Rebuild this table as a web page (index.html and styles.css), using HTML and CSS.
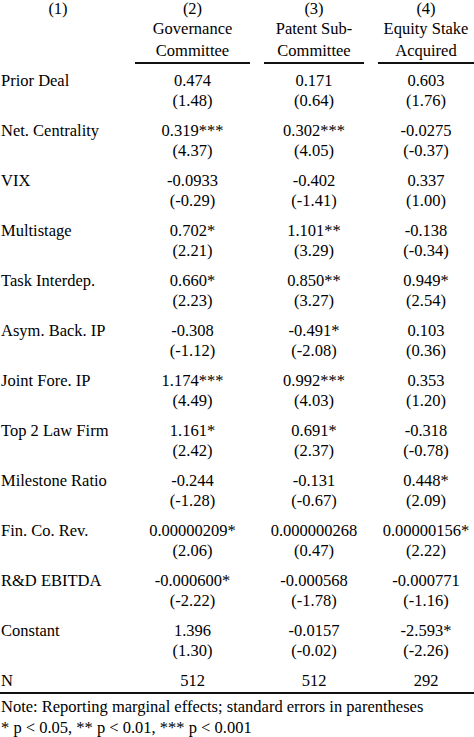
FILE: index.html
```html
<!DOCTYPE html>
<html>
<head>
<meta charset="utf-8">
<link rel="stylesheet" href="styles.css">
</head>
<body>
<div class="page">
  <div class="grid head">
    <div class="hcell first"><div class="l1">(1)</div></div>
    <div class="hcell ruled"><div class="l1">(2)</div><div class="ln">Governance</div><div class="ln">Committee</div></div>
    <div class="hcell ruled"><div class="l1">(3)</div><div class="ln">Patent Sub-</div><div class="ln">Committee</div></div>
    <div class="hcell ruled"><div class="l1">(4)</div><div class="ln">Equity Stake</div><div class="ln">Acquired</div></div>
  </div>

  <div class="grid body">
    <div class="label">Prior Deal</div>
    <div class="val">0.474<br>(1.48)</div>
    <div class="val">0.171<br>(0.64)</div>
    <div class="val">0.603<br>(1.76)</div>

    <div class="label">Net. Centrality</div>
    <div class="val">0.319***<br>(4.37)</div>
    <div class="val">0.302***<br>(4.05)</div>
    <div class="val">-0.0275<br>(-0.37)</div>

    <div class="label">VIX</div>
    <div class="val">-0.0933<br>(-0.29)</div>
    <div class="val">-0.402<br>(-1.41)</div>
    <div class="val">0.337<br>(1.00)</div>

    <div class="label">Multistage</div>
    <div class="val">0.702*<br>(2.21)</div>
    <div class="val">1.101**<br>(3.29)</div>
    <div class="val">-0.138<br>(-0.34)</div>

    <div class="label">Task Interdep.</div>
    <div class="val">0.660*<br>(2.23)</div>
    <div class="val">0.850**<br>(3.27)</div>
    <div class="val">0.949*<br>(2.54)</div>

    <div class="label">Asym. Back. IP</div>
    <div class="val">-0.308<br>(-1.12)</div>
    <div class="val">-0.491*<br>(-2.08)</div>
    <div class="val">0.103<br>(0.36)</div>

    <div class="label">Joint Fore. IP</div>
    <div class="val">1.174***<br>(4.49)</div>
    <div class="val">0.992***<br>(4.03)</div>
    <div class="val">0.353<br>(1.20)</div>

    <div class="label">Top 2 Law Firm</div>
    <div class="val">1.161*<br>(2.42)</div>
    <div class="val">0.691*<br>(2.37)</div>
    <div class="val">-0.318<br>(-0.78)</div>

    <div class="label">Milestone Ratio</div>
    <div class="val">-0.244<br>(-1.28)</div>
    <div class="val">-0.131<br>(-0.67)</div>
    <div class="val">0.448*<br>(2.09)</div>

    <div class="label">Fin. Co. Rev.</div>
    <div class="val">0.00000209*<br>(2.06)</div>
    <div class="val">0.000000268<br>(0.47)</div>
    <div class="val">0.00000156*<br>(2.22)</div>

    <div class="label">R&amp;D EBITDA</div>
    <div class="val">-0.000600*<br>(-2.22)</div>
    <div class="val">-0.000568<br>(-1.78)</div>
    <div class="val">-0.000771<br>(-1.16)</div>

    <div class="label">Constant</div>
    <div class="val">1.396<br>(1.30)</div>
    <div class="val">-0.0157<br>(-0.02)</div>
    <div class="val">-2.593*<br>(-2.26)</div>

    <div class="label">N</div>
    <div class="val">512</div>
    <div class="val">512</div>
    <div class="val">292</div>
  </div>

  <div class="notes">
    <div>Note: Reporting marginal effects; standard errors in parentheses</div>
    <div>* p &lt; 0.05, ** p &lt; 0.01, *** p &lt; 0.001</div>
  </div>
</div>
</body>
</html>
```

FILE: styles.css
```css
html, body {
  margin: 0;
  padding: 0;
  background: #ffffff;
}

body {
  width: 474px;
  height: 737px;
  overflow: hidden;
  font-family: "Liberation Serif", "Times New Roman", serif;
  font-size: 16.5px;
  color: #000000;
}

.grid {
  display: grid;
  grid-template-columns: 121px 115px 100px 96px;
  column-gap: 14px;
}

.hcell {
  text-align: center;
  white-space: nowrap;
}

.hcell .l1 {
  line-height: 18px;
}

.hcell .ln {
  line-height: 22px;
}

.hcell.first {
  padding-right: 5px;
}

.hcell.ruled {
  border-bottom: 2px solid #111111;
}

.body {
  line-height: 20px;
  row-gap: 10px;
  padding-top: 7px;
  padding-bottom: 1px;
  border-bottom: 2px solid #111111;
}

.label {
  padding-left: 1px;
  white-space: nowrap;
}

.val {
  text-align: center;
  white-space: nowrap;
}

.notes {
  line-height: 21px;
  padding-top: 2px;
  padding-left: 1px;
  white-space: nowrap;
}
```
